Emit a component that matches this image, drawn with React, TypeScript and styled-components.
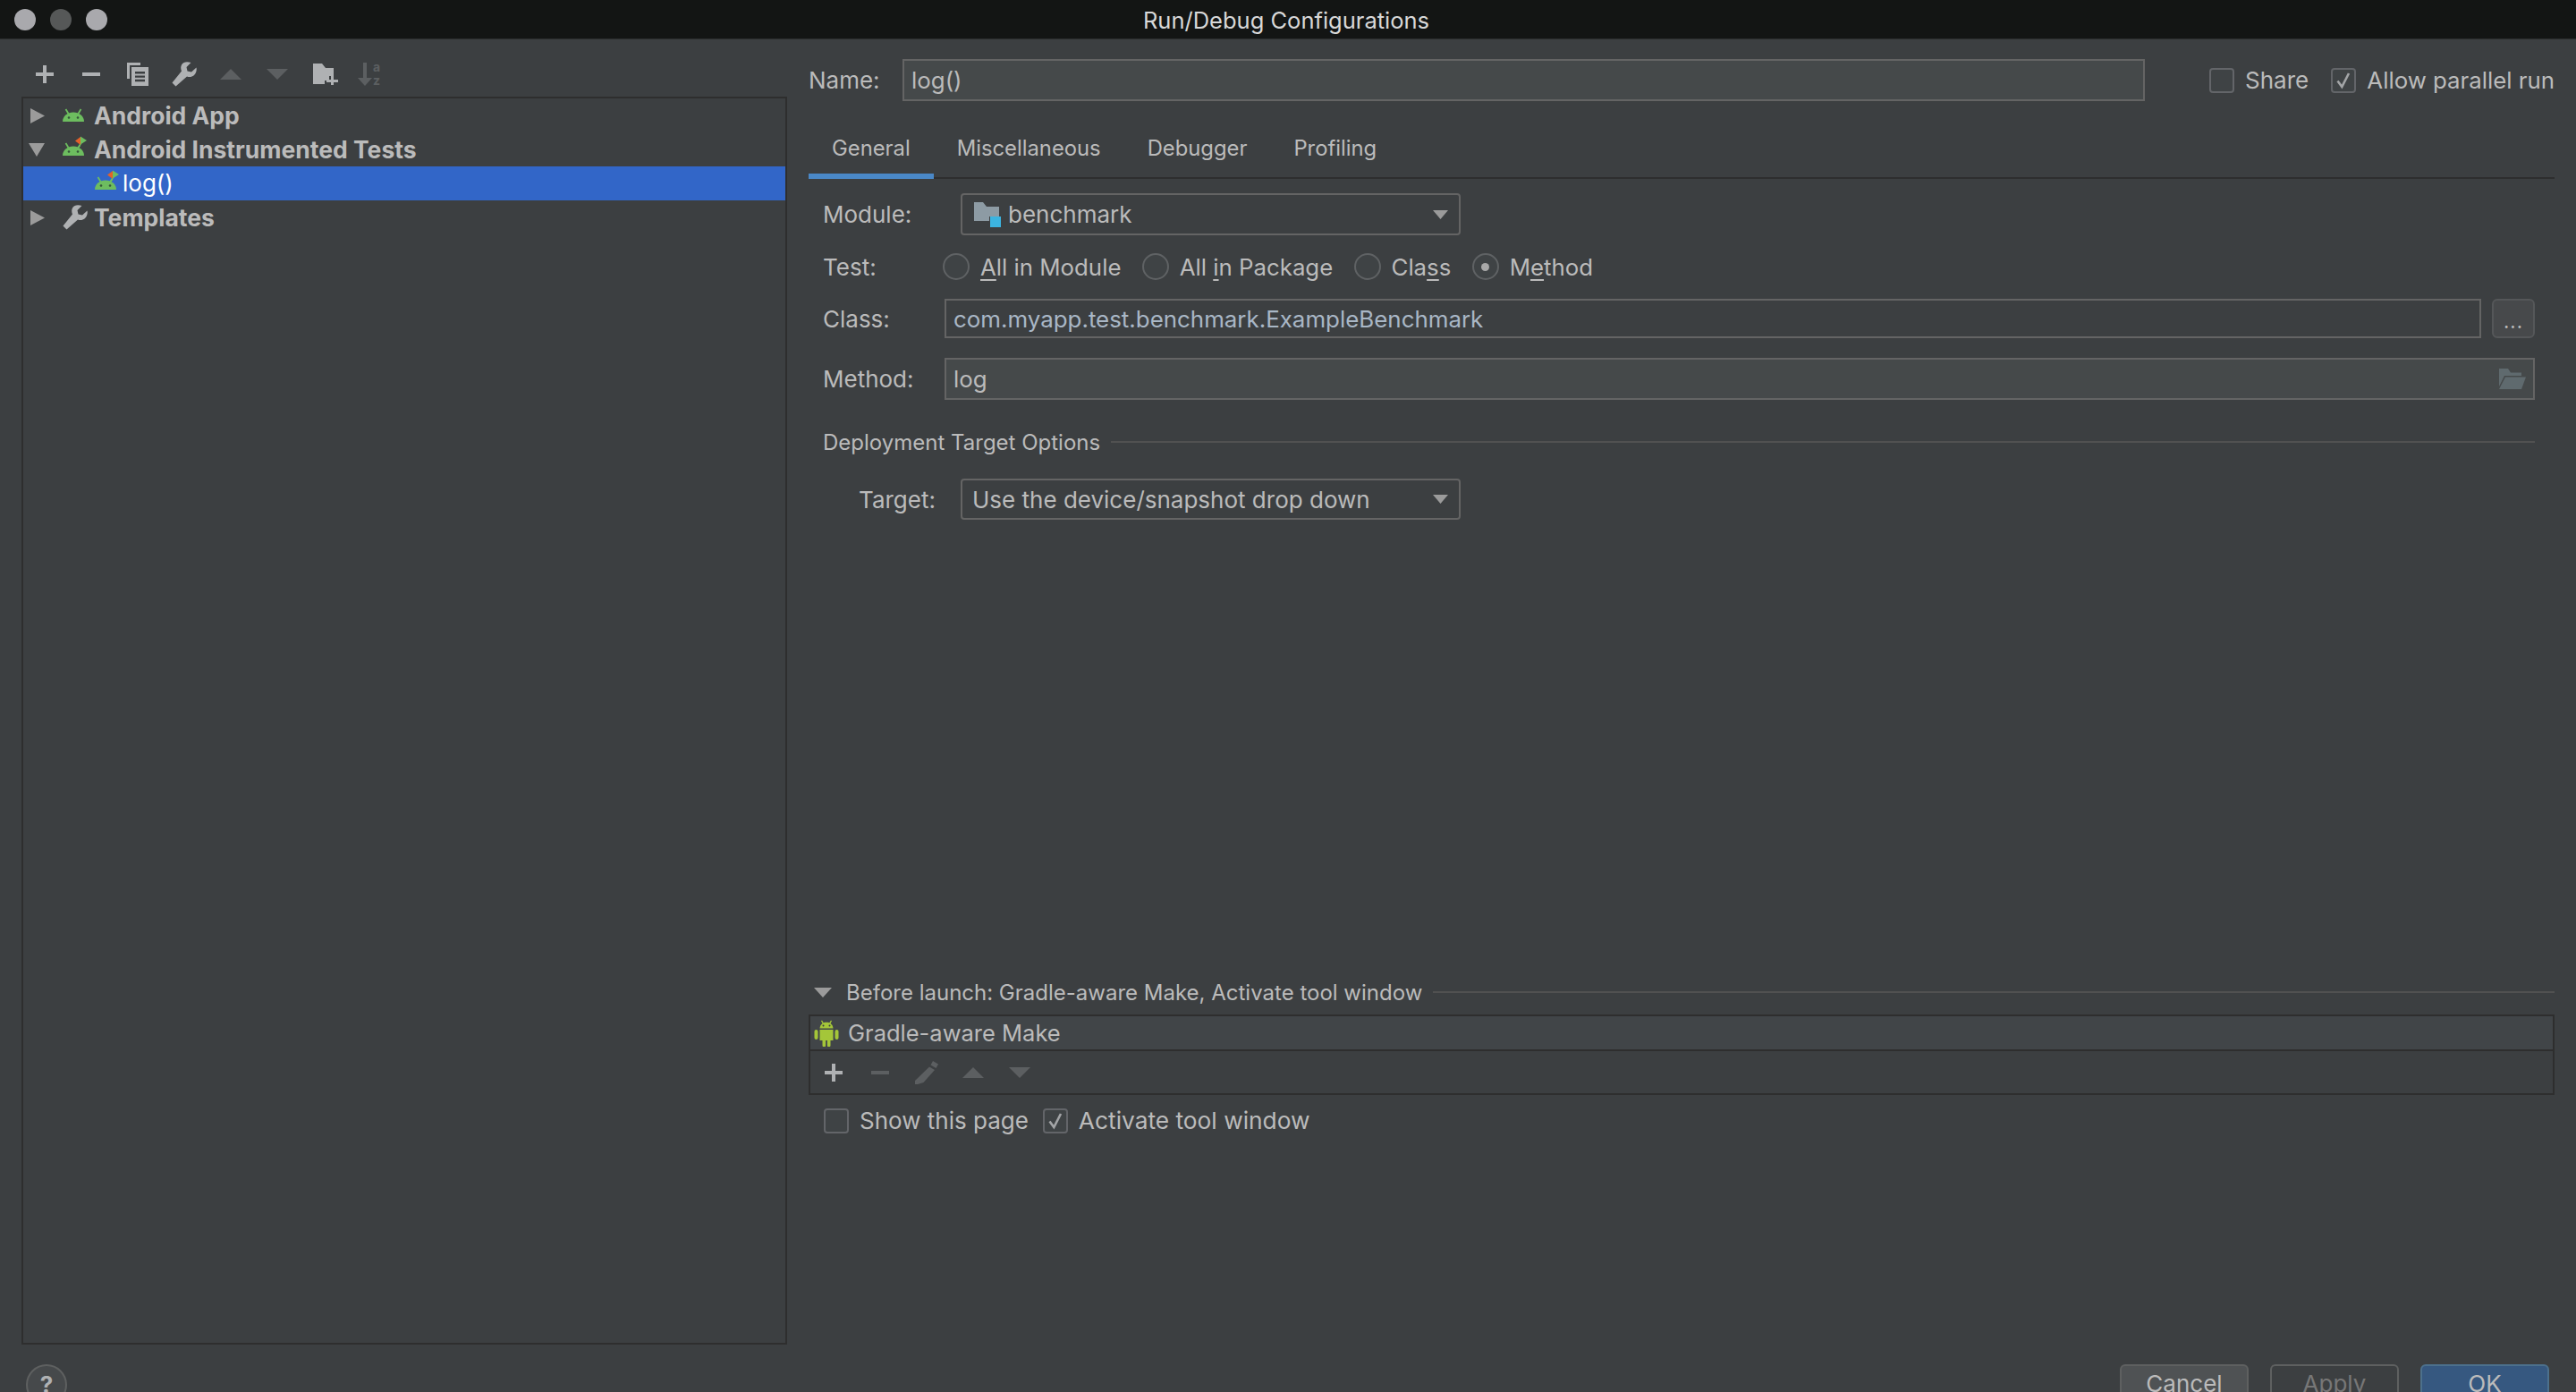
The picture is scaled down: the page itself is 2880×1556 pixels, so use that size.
import styled, { createGlobalStyle } from "styled-components";

// #region ##################################################################################### ICONS
const ICON = "#afb1b3";
const MUTED = "#5c5f61";

const Plus = ({ c = ICON }: { c?: string }) => (
  <svg width="20" height="20" viewBox="0 0 20 20">
    <path d="M8 0h4v8h8v4h-8v8H8v-8H0V8h8z" fill={c} />
  </svg>
);

const Minus = ({ c = ICON }: { c?: string }) => (
  <svg width="20" height="20" viewBox="0 0 20 20">
    <rect x="0" y="8" width="20" height="4" fill={c} />
  </svg>
);

const Copy = () => (
  <svg width="24" height="26" viewBox="0 0 24 26">
    <path d="M0 0h15v3H3v15H0z" fill={ICON} />
    <path
      d="M5 5h19v21H5zM9 10v2.4h11V10zM9 14.4v2.4h11v-2.4zM9 18.800v2.4h11v-2.400z"
      fill={ICON}
      fillRule="evenodd"
    />
  </svg>
);

const Wrench = () => (
  <svg width="28" height="28" viewBox="0 0 28 28">
    <path
      d="M27.500 6.500 22 11.500 17.500 10.500 16.500 6 21.500 1C17.500-.5 13-.2 11 3.500 9.700 6 10.200 8.500 11 10.500L.5 23.500 4.500 27.500 17 16.500C19.500 17.500 22.500 17.300 24.800 15.300 27.400 13 28.200 9.500 27.500 6.500z"
      fill={ICON}
    />
  </svg>
);

const TriUp = ({ c = MUTED }: { c?: string }) => (
  <svg width="24" height="12" viewBox="0 0 24 12">
    <path d="M12 0 24 12H0z" fill={c} />
  </svg>
);

const TriDown = ({ c = MUTED, w = 24, h = 12 }: { c?: string; w?: number; h?: number }) => (
  <svg width={w} height={h} viewBox="0 0 24 12" preserveAspectRatio="none">
    <path d="M0 0h24L12 12z" fill={c} />
  </svg>
);

const TriRight = () => (
  <svg width="16" height="17" viewBox="0 0 16 17">
    <path d="M0 0 16 8.500 0 17z" fill="#9b9b9b" />
  </svg>
);

const FolderPlus = () => (
  <svg width="32" height="24" viewBox="-4 0 32 24">
    <path d="M0 0h10l4 5h9v9h-5v5h-5v4H0z" fill={ICON} />
    <path d="M20 14h3v4h5v3h-5v3h-3v-3h-5v-3h5z" fill={ICON} />
  </svg>
);

const SortAz = () => (
  <svg width="28" height="36" viewBox="0 -5 28 36">
    <path d="M6 0h4v17h6L8 26 0 17h6z" fill={MUTED} />
    <text x="17" y="10" fontFamily="Inter, sans-serif" fontWeight="700" fontSize="14" fill={MUTED}>
      a
    </text>
    <text x="17" y="25" fontFamily="Inter, sans-serif" fontWeight="700" fontSize="14" fill={MUTED}>
      z
    </text>
  </svg>
);

const Pencil = () => (
  <svg width="26" height="26" viewBox="0 0 26 26">
    <path d="M20 0l6 3.500-2.500 4.500-6-3.500zM16 6.500l6 3.500L9.500 24 3 26H0v-4z" fill={MUTED} />
  </svg>
);

const AndroidHead = ({ flag = false }: { flag?: boolean }) => (
  <svg width="30" height="26" viewBox="0 0 30 26">
    <path d="M0 25A12 10.500 0 0 1 24 25z" fill="#6dbd5f" />
    <path d="M3.500 11 6.500 16M20.500 11 17.500 16" stroke="#6dbd5f" strokeWidth="1.800" />
    <circle cx="7" cy="20.500" r="1.300" fill="#35553a" />
    <circle cx="17" cy="20.500" r="1.300" fill="#35553a" />
    {flag && (
      <>
        <path d="M20 4v9l-6-4.500z" fill="#e2622a" />
        <path d="M20 3.500l7 4.500-7 4.500z" fill="#6dbd5f" />
        <path d="M20 12v2L17 18h-2.500z" fill="#6dbd5f" />
      </>
    )}
  </svg>
);

const GradleBot = () => (
  <svg width="28" height="30" viewBox="0 0 28 30">
    <path
      d="M6.500 9.500C6.700 6.800 8 5 9.500 4L8 1.200 9 .6 10.700 3.300C12 2.800 13 2.700 14 2.700 15 2.700 16 2.800 17.300 3.300L19 .6 20 1.200 18.500 4C20 5 21.300 6.800 21.500 9.500z"
      fill="#a4c639"
    />
    <path d="M6.500 11h15v12h-3v5.500a1.800 1.800 0 0 1-3.600 0V23h-1.800v5.500a1.800 1.800 0 0 1-3.600 0V23h-3z" fill="#a4c639" />
    <rect x="0.500" y="11" width="4" height="11" rx="2" fill="#a4c639" />
    <rect x="23.500" y="11" width="4" height="11" rx="2" fill="#a4c639" />
    <circle cx="10.500" cy="6.500" r="1" fill="#3c3f41" />
    <circle cx="17.500" cy="6.500" r="1" fill="#3c3f41" />
  </svg>
);

const ModuleFolder = () => (
  <svg width="32" height="28" viewBox="-2 0 32 28">
    <path d="M0 0h10l4 5h14v16H0z" fill="#8d9ba4" />
    <rect x="17" y="16" width="13" height="12" fill="#3c3f41" />
    <rect x="18" y="16" width="12" height="12" fill="#3cb4e0" />
  </svg>
);

const OpenFolder = () => (
  <svg width="30" height="23" viewBox="0 0 30 23">
    <path d="M0 0h10l3 4.500h12v3.500H6L0 20z" fill="#5f6a6e" />
    <path d="M7 9.500h23L25 23H0z" fill="#5f6a6e" />
  </svg>
);

const Tick = () => (
  <svg width="18" height="20" viewBox="0 0 18 20">
    <path d="M2.500 10.500 7.300 17 15 2" fill="none" stroke="#a3a5a7" strokeWidth="2.600" />
  </svg>
);
// #endregion

// #region ##################################################################################### STYLES
const GlobalStyle = createGlobalStyle`
  html, body {
    margin: 0;
    height: 100%;
    background: #3c3f41;
    overflow: hidden;
  }
  #root {
    height: 100%;
  }
`;

const Window = styled.div`
  display: flex;
  flex-direction: column;
  height: 1556px;
  overflow: hidden;
  background: #3c3f41;
  color: #bbbbbb;
  font-family: Inter, "Liberation Sans", sans-serif;
  font-size: 26px;
`;

const TitleBar = styled.div`
  flex: none;
  display: grid;
  grid-template-columns: 1fr auto 1fr;
  align-items: center;
  height: 44px;
  box-sizing: border-box;
  padding: 0 16px;
  background: #131514;
  border-bottom: 1px solid #2b2d2e;
`;

const Lights = styled.div`
  display: flex;
  gap: 16px;
`;

const Light = styled.span<{ $dim?: boolean }>`
  width: 24px;
  height: 24px;
  border-radius: 50%;
  background: ${(p) => (p.$dim ? "#565858" : "#a9a9ad")};
`;

const Title = styled.div`
  color: #d8d8d8;
  font-size: 25.5px;
  margin-right: 4px;
  padding-top: 1px;
`;

const Main = styled.div`
  flex: 1;
  display: flex;
  min-height: 0;
`;

const Side = styled.div`
  flex: none;
  width: 856px;
  margin-left: 24px;
  display: flex;
  flex-direction: column;
`;

const SideTools = styled.div`
  flex: none;
  height: 64px;
  display: flex;
  align-items: center;
  padding-top: 14px;
  box-sizing: border-box;
`;

const ToolSlot = styled.span`
  flex: none;
  width: 52px;
  display: flex;
  justify-content: center;
  align-items: center;
`;

const Tree = styled.div`
  flex: 1;
  border: 2px solid #2e2e2e;
`;

const TreeRow = styled.div<{ $selected?: boolean; $indent?: number }>`
  height: 38px;
  display: flex;
  align-items: center;
  padding-left: ${(p) => p.$indent ?? 0}px;
  background: ${(p) => (p.$selected ? "#3266c8" : "transparent")};
  color: ${(p) => (p.$selected ? "#ffffff" : "#bbbbbb")};
  font-weight: ${(p) => (p.$selected ? 400 : 700)};
  font-size: ${(p) => (p.$selected ? 26 : 26.5)}px;
  line-height: 36px;
`;

const Caret = styled.span<{ $shift?: number }>`
  flex: none;
  width: 44px;
  padding-left: ${(p) => 8 - (p.$shift ?? 0)}px;
  box-sizing: border-box;
  display: flex;
`;

const TreeIcon = styled.span<{ $width?: number; $lift?: number }>`
  flex: none;
  width: ${(p) => p.$width ?? 35}px;
  margin-bottom: ${(p) => p.$lift ?? 10}px;
  display: flex;
`;

const Form = styled.div`
  flex: 1;
  min-width: 0;
  margin-left: 24px;
  margin-right: 24px;
  display: flex;
  flex-direction: column;
`;

const NameRow = styled.div`
  flex: none;
  margin-top: 22px;
  height: 47px;
  display: flex;
  align-items: center;
`;

const NameLabel = styled.label`
  flex: none;
  width: 105px;
`;

const Input = styled.div<{ $filled?: boolean; $code?: boolean }>`
  flex: 1;
  min-width: 0;
  height: 100%;
  box-sizing: border-box;
  display: flex;
  align-items: center;
  justify-content: space-between;
  padding: 0 8px 0 8px;
  border: 2px solid #646464;
  background: ${(p) => (p.$filled ? "#45494a" : "#3c3f41")};
  color: ${(p) => (p.$code ? "#a9b7c6" : "#bbbbbb")};
  font-size: 25.9px;
`;

const Check = styled.span<{ $size?: number }>`
  display: inline-flex;
  align-items: center;
  gap: 12px;
  white-space: nowrap;
  font-size: ${(p) => p.$size ?? 26}px;
`;

const Box = styled.span`
  flex: none;
  width: 28px;
  height: 28px;
  box-sizing: border-box;
  border: 2px solid #636569;
  border-radius: 4px;
  background: #3f4345;
  display: flex;
  align-items: center;
  justify-content: center;
`;

const NameChecks = styled.div`
  flex: none;
  margin-left: 72px;
  width: 386px;
  display: flex;
  justify-content: space-between;
`;

const TabBar = styled.div`
  flex: none;
  margin-top: 27px;
  height: 60px;
  box-sizing: border-box;
  display: flex;
  border-bottom: 2px solid #2e2e2e;
  font-size: 23.8px;
`;

const Tab = styled.div<{ $active?: boolean }>`
  height: 60px;
  box-sizing: border-box;
  line-height: 52px;
  padding: 0 26px;
  border-bottom: 6px solid ${(p) => (p.$active ? "#4a88c7" : "transparent")};
`;

const Panel = styled.div`
  flex: 1;
  padding: 0 22px 0 16px;
  display: flex;
  flex-direction: column;
`;

const Row = styled.div<{ $top: number; $height: number }>`
  flex: none;
  display: flex;
  align-items: center;
  margin-top: ${(p) => p.$top}px;
  height: ${(p) => p.$height}px;
`;

const FieldLabel = styled.label<{ $inset?: number }>`
  flex: none;
  width: 136px;
  box-sizing: border-box;
  padding-left: ${(p) => p.$inset ?? 0}px;
`;

const Combo = styled.div`
  margin-left: 18px;
  width: 559px;
  height: 100%;
  box-sizing: border-box;
  display: flex;
  align-items: center;
  gap: 8px;
  padding: 0 12px 0 11px;
  border: 2px solid #646464;
  border-radius: 4px;
`;

const ComboText = styled.span`
  flex: 1;
`;

const Radios = styled.div`
  display: flex;
  gap: 23.300px;
  margin-left: -2px;
  font-size: 25.800px;
`;

const Radio = styled.span`
  display: inline-flex;
  align-items: center;
  gap: 12px;
`;

const RadioDot = styled.span<{ $on?: boolean }>`
  flex: none;
  width: 30px;
  height: 30px;
  box-sizing: border-box;
  border: 2px solid #5f6264;
  border-radius: 50%;
  background: #3f4345;
  display: flex;
  align-items: center;
  justify-content: center;

  &::after {
    content: "";
    display: ${(p) => (p.$on ? "block" : "none")};
    width: 9px;
    height: 9px;
    border-radius: 50%;
    background: #a8a8a8;
  }
`;

const Mn = styled.span`
  text-decoration: underline;
  text-underline-offset: 4px;
  text-decoration-thickness: 2px;
`;

const DotsButton = styled.div`
  flex: none;
  margin-left: 12px;
  width: 48px;
  height: 44px;
  box-sizing: border-box;
  border: 2px solid #555759;
  border-radius: 6px;
  background: #47494b;
  display: flex;
  align-items: flex-end;
  justify-content: center;
  padding-bottom: 6px;
  font-size: 22px;
  line-height: 22px;
  letter-spacing: 1px;
`;

const SectionHead = styled.div`
  display: flex;
  align-items: center;
  gap: 12px;
  height: 100%;
  width: 100%;
  font-size: 24px;
`;

const SectionLine = styled.span`
  flex: 1;
  height: 2px;
  background: #515151;
`;

const Spacer = styled.div`
  flex: 1;
`;

const Before = styled.div`
  flex: none;
  margin-left: -16px;
  margin-right: -22px;
  padding-bottom: 235px;
`;

const BeforeHead = styled.div`
  height: 30px;
  padding-left: 6px;
`;

const HeadCaret = styled.span`
  flex: none;
  display: flex;
  margin-right: 4px;
`;

const BeforeTable = styled.div`
  margin-top: 10px;
  border: 2px solid #2e2e2e;
`;

const BeforeItem = styled.div`
  height: 37px;
  display: flex;
  align-items: center;
  gap: 10px;
  padding-left: 4px;
  background: #414548;
  border-bottom: 2px solid #2e2e2e;
  font-size: 25.500px;
`;

const BeforeTools = styled.div`
  height: 47px;
  display: flex;
  align-items: center;
`;

const BeforeChecks = styled.div`
  margin-top: 13px;
  padding-left: 17px;
  display: flex;
  gap: 16px;
`;

const Footer = styled.div`
  flex: none;
  height: 53px;
  display: flex;
  justify-content: space-between;
  padding: 22px 30px 0 29px;
  box-sizing: border-box;
`;

const Help = styled.div`
  flex: none;
  width: 46px;
  height: 46px;
  box-sizing: border-box;
  border: 2px solid #5e6060;
  border-radius: 50%;
  background: #46494b;
  color: #afb1b3;
  font-weight: 700;
  font-size: 26px;
  line-height: 42px;
  text-align: center;
`;

const Buttons = styled.div`
  display: flex;
  gap: 24px;
`;

const Button = styled.div<{ $kind?: "default" | "primary" | "disabled" }>`
  flex: none;
  width: 144px;
  height: 58px;
  box-sizing: border-box;
  border-radius: 6px;
  text-align: center;
  line-height: 40px;
  border: 2px solid ${(p) => (p.$kind === "primary" ? "#4c708c" : "#5e6060")};
  background: ${(p) =>
    p.$kind === "primary" ? "#365880" : p.$kind === "disabled" ? "#3c3f41" : "#4f5254"};
  color: ${(p) => (p.$kind === "disabled" ? "#777777" : "#bbbbbb")};
`;
// #endregion

// #region ##################################################################################### COMPONENT
const App = () => {
  return (
    <Window>
      <GlobalStyle />

      <TitleBar>
        <Lights>
          <Light />
          <Light $dim />
          <Light />
        </Lights>
        <Title>Run/Debug Configurations</Title>
      </TitleBar>

      <Main>
        <Side>
          <SideTools>
            <ToolSlot><Plus /></ToolSlot>
            <ToolSlot><Minus /></ToolSlot>
            <ToolSlot><Copy /></ToolSlot>
            <ToolSlot><Wrench /></ToolSlot>
            <ToolSlot><TriUp /></ToolSlot>
            <ToolSlot><TriDown /></ToolSlot>
            <ToolSlot><FolderPlus /></ToolSlot>
            <ToolSlot><SortAz /></ToolSlot>
          </SideTools>
          <Tree>
            <TreeRow>
              <Caret><TriRight /></Caret>
              <TreeIcon><AndroidHead /></TreeIcon>
              Android App
            </TreeRow>
            <TreeRow>
              <Caret $shift={2}><TriDown c="#9b9b9b" w={18} h={15} /></Caret>
              <TreeIcon><AndroidHead flag /></TreeIcon>
              Android Instrumented Tests
            </TreeRow>
            <TreeRow $selected $indent={80}>
              <TreeIcon $width={31}><AndroidHead flag /></TreeIcon>
              log()
            </TreeRow>
            <TreeRow>
              <Caret><TriRight /></Caret>
              <TreeIcon $lift={0}><Wrench /></TreeIcon>
              Templates
            </TreeRow>
          </Tree>
        </Side>

        <Form>
          <NameRow>
            <NameLabel>Name:</NameLabel>
            <Input $filled>log()</Input>
            <NameChecks>
              <Check><Box />Share</Check>
              <Check $size={25.8}><Box><Tick /></Box>Allow parallel run</Check>
            </NameChecks>
          </NameRow>

          <TabBar>
            <Tab $active>General</Tab>
            <Tab>Miscellaneous</Tab>
            <Tab>Debugger</Tab>
            <Tab>Profiling</Tab>
          </TabBar>

          <Panel>
            <Row $top={16} $height={47}>
              <FieldLabel>Module:</FieldLabel>
              <Combo>
                <ModuleFolder />
                <ComboText>benchmark</ComboText>
                <TriDown c="#9b9b9b" w={17} h={10} />
              </Combo>
            </Row>
            <Row $top={20} $height={30}>
              <FieldLabel>Test:</FieldLabel>
              <Radios>
                <Radio><RadioDot /><span><Mn>A</Mn>ll in Module</span></Radio>
                <Radio><RadioDot /><span>All <Mn>i</Mn>n Package</span></Radio>
                <Radio><RadioDot /><span>Cla<Mn>s</Mn>s</span></Radio>
                <Radio><RadioDot $on /><span>M<Mn>e</Mn>thod</span></Radio>
              </Radios>
            </Row>
            <Row $top={21} $height={44}>
              <FieldLabel>Class:</FieldLabel>
              <Input $code>com.myapp.test.benchmark.ExampleBenchmark</Input>
              <DotsButton>...</DotsButton>
            </Row>
            <Row $top={22} $height={47}>
              <FieldLabel>Method:</FieldLabel>
              <Input $filled>
                log
                <OpenFolder />
              </Input>
            </Row>
            <Row $top={32} $height={30}>
              <SectionHead>
                Deployment Target Options
                <SectionLine />
              </SectionHead>
            </Row>
            <Row $top={26} $height={46}>
              <FieldLabel $inset={40}>Target:</FieldLabel>
              <Combo>
                <ComboText>Use the device/snapshot drop down</ComboText>
                <TriDown c="#9b9b9b" w={17} h={10} />
              </Combo>
            </Row>

            <Spacer />

            <Before>
              <BeforeHead>
                <SectionHead>
                  <HeadCaret><TriDown c="#9b9b9b" w={20} h={11} /></HeadCaret>
                  Before launch: Gradle-aware Make, Activate tool window
                  <SectionLine />
                </SectionHead>
              </BeforeHead>
              <BeforeTable>
                <BeforeItem>
                  <GradleBot />
                  Gradle-aware Make
                </BeforeItem>
                <BeforeTools>
                  <ToolSlot><Plus /></ToolSlot>
                  <ToolSlot><Minus c={MUTED} /></ToolSlot>
                  <ToolSlot><Pencil /></ToolSlot>
                  <ToolSlot><TriUp /></ToolSlot>
                  <ToolSlot><TriDown /></ToolSlot>
                </BeforeTools>
              </BeforeTable>
              <BeforeChecks>
                <Check><Box />Show this page</Check>
                <Check $size={26.3}><Box><Tick /></Box>Activate tool window</Check>
              </BeforeChecks>
            </Before>
          </Panel>
        </Form>
      </Main>

      <Footer>
        <Help>?</Help>
        <Buttons>
          <Button>Cancel</Button>
          <Button $kind="disabled">Apply</Button>
          <Button $kind="primary">OK</Button>
        </Buttons>
      </Footer>
    </Window>
  );
};
// #endregion

// #region ##################################################################################### EXPORTS
export default App;
// #endregion
